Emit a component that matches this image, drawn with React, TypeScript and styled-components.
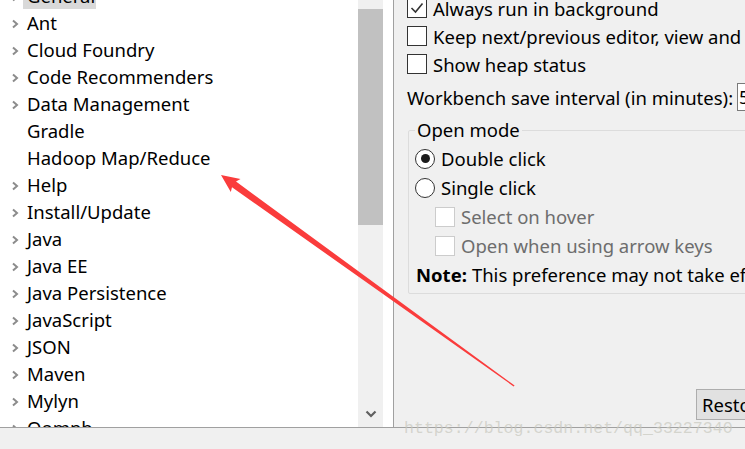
import React from 'react';
import styled, { createGlobalStyle } from 'styled-components';

const GlobalStyle = createGlobalStyle`
  html, body {
    margin: 0;
    padding: 0;
    background: #f0f0f0;
  }
  * {
    box-sizing: border-box;
  }
`;

const Window = styled.div`
  position: relative;
  width: 745px;
  height: 449px;
  overflow: hidden;
  background: #f0f0f0;
  font-family: 'Noto Sans', 'Liberation Sans', sans-serif;
  font-size: 18.5px;
  color: #000;
  display: flex;
  flex-direction: column;
`;

const Main = styled.div`
  display: flex;
  height: 428px;
  border-bottom: 1px solid #a0a0a0;
`;

const LeftPane = styled.div`
  width: 394px;
  flex-shrink: 0;
  display: flex;
  background: #fff;
  border-right: 1px solid #a0a0a0;
  padding-right: 10px;
`;

const Tree = styled.ul`
  list-style: none;
  margin: -18px 0 0;
  padding: 0;
  width: 358px;
  overflow: hidden;
`;

const TreeRow = styled.li`
  display: flex;
  align-items: center;
  height: 27px;
  padding-left: 11px;
`;

const Twisty = styled.span`
  width: 16px;
  height: 27px;
  display: flex;
  align-items: center;
  padding-top: 3px;
`;

const TreeLabel = styled.span<{ $selected?: boolean }>`
  line-height: 27px;
  margin-left: -4px;
  padding: 0 1px 0 4px;
  white-space: nowrap;
  background: ${p => (p.$selected ? '#d9d9d9' : 'transparent')};
`;

const ScrollTrack = styled.div`
  width: 25px;
  background: #f0f0f0;
  display: flex;
  flex-direction: column;
  align-items: stretch;
`;

const ScrollButton = styled.div<{ $offset?: number }>`
  height: 26px;
  margin-top: ${p => p.$offset ?? 0}px;
  display: flex;
  align-items: center;
  justify-content: center;
  flex-shrink: 0;
`;

const Thumb = styled.div`
  height: 216px;
  background: #c1c1c1;
  flex-shrink: 0;
`;

const ScrollGap = styled.div`
  flex: 1;
`;

const RightPane = styled.div`
  flex: 1;
  min-width: 0;
  overflow: hidden;
  display: flex;
  flex-direction: column;
  padding: 0 0 7px 13px;
`;

const Options = styled.div`
  margin-top: -6px;
`;

const CheckRow = styled.div<{ $indent?: number; $height?: number }>`
  display: flex;
  align-items: center;
  gap: 6px;
  height: ${p => p.$height ?? 28}px;
  padding-left: ${p => p.$indent ?? 0}px;
  white-space: nowrap;
`;

const Box = styled.span<{ $disabled?: boolean }>`
  width: 20px;
  height: 20px;
  flex-shrink: 0;
  background: #fff;
  border: 1px solid ${p => (p.$disabled ? '#cccccc' : '#333333')};
  display: flex;
  align-items: center;
  justify-content: center;
`;

const Radio = styled.span`
  width: 20px;
  height: 20px;
  flex-shrink: 0;
  border-radius: 50%;
  background: #fff;
  border: 1px solid #333;
  display: flex;
  align-items: center;
  justify-content: center;
`;

const RadioDot = styled.span`
  width: 9px;
  height: 9px;
  border-radius: 50%;
  background: #1a1a1a;
`;

const Label = styled.span<{ $disabled?: boolean }>`
  color: ${p => (p.$disabled ? '#6d6d6d' : '#000')};
`;

const SaveRow = styled.div`
  display: flex;
  align-items: center;
  gap: 4px;
  height: 28px;
  margin-top: 5px;
  white-space: nowrap;
`;

const NumberInput = styled.div`
  width: 60px;
  height: 28px;
  flex-shrink: 0;
  border: 1px solid #7a7a7a;
  background: #fff;
  padding-left: 1px;
  line-height: 26px;
`;

const Group = styled.fieldset`
  margin: 7px 0 0 1px;
  width: 420px;
  border: 1px solid #dcdcdc;
  border-radius: 2px;
  padding: 2px 0 4px 6px;
`;

const GroupTitle = styled.legend`
  padding: 0 2px;
  line-height: 24px;
`;

const NoteRow = styled.div`
  height: 29px;
  display: flex;
  align-items: center;
  padding-left: 1px;
  white-space: nowrap;
`;

const Bold = styled.b`
  font-weight: 700;
  margin-right: 5px;
`;

const RestoreButton = styled.div`
  margin-top: auto;
  margin-left: 289px;
  height: 31px;
  width: 160px;
  flex-shrink: 0;
  background: #e1e1e1;
  border: 1px solid #adadad;
  padding-left: 5px;
  line-height: 29px;
  white-space: nowrap;
`;

const Footer = styled.div`
  flex: 1;
  background: #f0f0f0;
`;

const Watermark = styled.div`
  position: absolute;
  left: 404px;
  top: 419px;
  font-family: 'Liberation Mono', monospace;
  font-size: 16.6px;
  color: rgba(200, 200, 190, 0.7);
  white-space: nowrap;
  pointer-events: none;
`;

const Overlay = styled.svg`
  position: absolute;
  left: 0;
  top: 0;
  pointer-events: none;
`;

const Chevron = () => (
  <svg width="8" height="10" viewBox="0 0 8 10">
    <polyline points="2,1.5 6,5 2,8.5" fill="none" stroke="#8c8c8c" strokeWidth="2" />
  </svg>
);

const Check = () => (
  <svg width="16" height="16" viewBox="0 0 16 16">
    <polyline points="2.5,8 6.5,12 13.5,3.5" fill="none" stroke="#333" strokeWidth="1.6" />
  </svg>
);

const treeItems: { label: string; expandable: boolean; selected?: boolean }[] = [
  { label: 'General', expandable: true, selected: true },
  { label: 'Ant', expandable: true },
  { label: 'Cloud Foundry', expandable: true },
  { label: 'Code Recommenders', expandable: true },
  { label: 'Data Management', expandable: true },
  { label: 'Gradle', expandable: false },
  { label: 'Hadoop Map/Reduce', expandable: false },
  { label: 'Help', expandable: true },
  { label: 'Install/Update', expandable: true },
  { label: 'Java', expandable: true },
  { label: 'Java EE', expandable: true },
  { label: 'Java Persistence', expandable: true },
  { label: 'JavaScript', expandable: true },
  { label: 'JSON', expandable: true },
  { label: 'Maven', expandable: true },
  { label: 'Mylyn', expandable: true },
  { label: 'Oomph', expandable: true },
];

const App: React.FC = () => {
  return (
    <Window>
      <GlobalStyle />
      <Main>
        <LeftPane>
          <Tree>
            {treeItems.map(item => (
              <TreeRow key={item.label}>
                <Twisty>{item.expandable && <Chevron />}</Twisty>
                <TreeLabel $selected={item.selected}>{item.label}</TreeLabel>
              </TreeRow>
            ))}
          </Tree>
          <ScrollTrack>
            <ScrollButton $offset={-17}>
              <svg width="12" height="8" viewBox="0 0 12 8">
                <polyline points="1.5,6.5 6,2 10.5,6.5" fill="none" stroke="#606060" strokeWidth="2.2" />
              </svg>
            </ScrollButton>
            <Thumb />
            <ScrollGap />
            <ScrollButton>
              <svg width="12" height="8" viewBox="0 0 12 8">
                <polyline points="1.5,1.5 6,6 10.5,1.5" fill="none" stroke="#606060" strokeWidth="2.2" />
              </svg>
            </ScrollButton>
          </ScrollTrack>
        </LeftPane>

        <RightPane>
          <Options>
            <CheckRow>
              <Box><Check /></Box>
              <Label>Always run in background</Label>
            </CheckRow>
            <CheckRow>
              <Box />
              <Label>Keep next/previous editor, view and perspectives dialog open</Label>
            </CheckRow>
            <CheckRow>
              <Box />
              <Label>Show heap status</Label>
            </CheckRow>
          </Options>

          <SaveRow>
            <span>Workbench save interval (in minutes):</span>
            <NumberInput>5</NumberInput>
          </SaveRow>

          <Group>
            <GroupTitle>Open mode</GroupTitle>
            <CheckRow $height={29}>
              <Radio><RadioDot /></Radio>
              <Label>Double click</Label>
            </CheckRow>
            <CheckRow $height={29}>
              <Radio />
              <Label>Single click</Label>
            </CheckRow>
            <CheckRow $height={29} $indent={20}>
              <Box $disabled />
              <Label $disabled>Select on hover</Label>
            </CheckRow>
            <CheckRow $height={29} $indent={20}>
              <Box $disabled />
              <Label $disabled>Open when using arrow keys</Label>
            </CheckRow>
            <NoteRow>
              <Bold>Note:</Bold>
              This preference may not take effect on all views
            </NoteRow>
          </Group>

          <RestoreButton>Restore Defaults</RestoreButton>
        </RightPane>
      </Main>
      <Footer />

      <Watermark>https://blog.csdn.net/qq_33227340</Watermark>

      <Overlay width="745" height="449" viewBox="0 0 745 449">
        <polygon
          points="221,175 240.5,179 236,181.6 514.6,385.6 513.6,386.4 232,187.2 230.8,192"
          fill="#fa3c3c"
        />
      </Overlay>
    </Window>
  );
};

export default App;
